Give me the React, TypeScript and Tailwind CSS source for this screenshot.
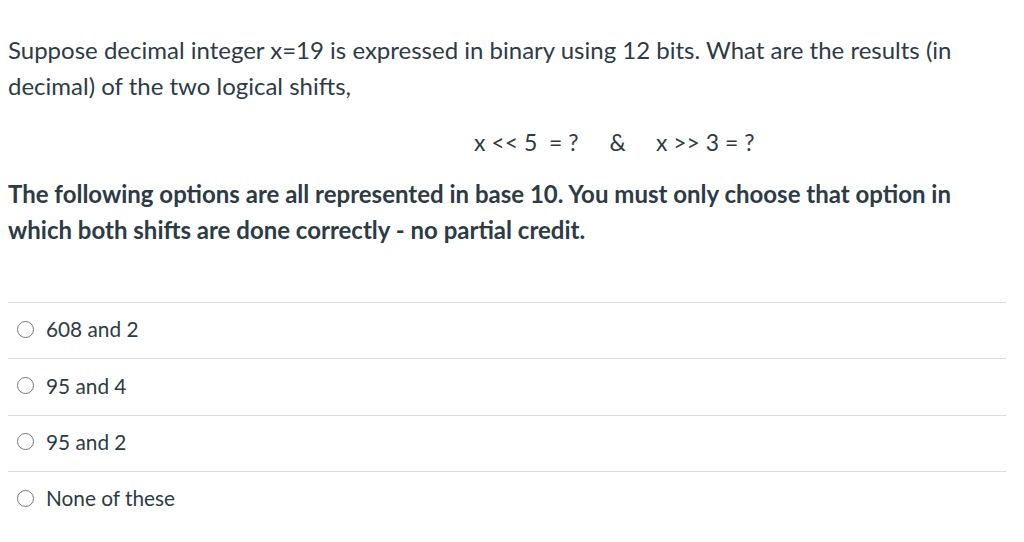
import React from "react"

const options = ["608 and 2", "95 and 4", "95 and 2", "None of these"]

export default function App() {
  return (
    <div className="min-h-screen bg-white text-[#2d3b45] font-['Lato',sans-serif] px-2">
      <div className="pt-[32px] text-[24px] leading-[36px]">
        Suppose decimal integer x=19 is expressed in binary using 12 bits. What are the results (in
        decimal) of the two logical shifts,
      </div>
      <div className="pl-[466px] pt-[20px] text-[23px] leading-[36px] whitespace-pre">
        <span>{"x << 5  = ?"}</span>
        <span className="inline-block ml-[31px]">&amp;</span>
        <span className="inline-block ml-[30px]">{"x >> 3 = ?"}</span>
      </div>
      <div className="pt-[16px] text-[24px] leading-[36px] font-bold">
        The following options are all represented in base 10. You must only choose that option in
        which both shifts are done correctly - no partial credit.
      </div>
      <div className="mt-[54px] mr-[10px]">
        {options.map((opt) => (
          <div key={opt} className="border-t border-[#dcdcdc] h-[56.4px] flex items-center pb-[3px]">
            <span className="ml-[9px] w-[17px] h-[17px] rounded-full border border-[#777] bg-white" />
            <span className="ml-[12px] text-[20.8px] leading-[28px]">{opt}</span>
          </div>
        ))}
      </div>
    </div>
  )
}
